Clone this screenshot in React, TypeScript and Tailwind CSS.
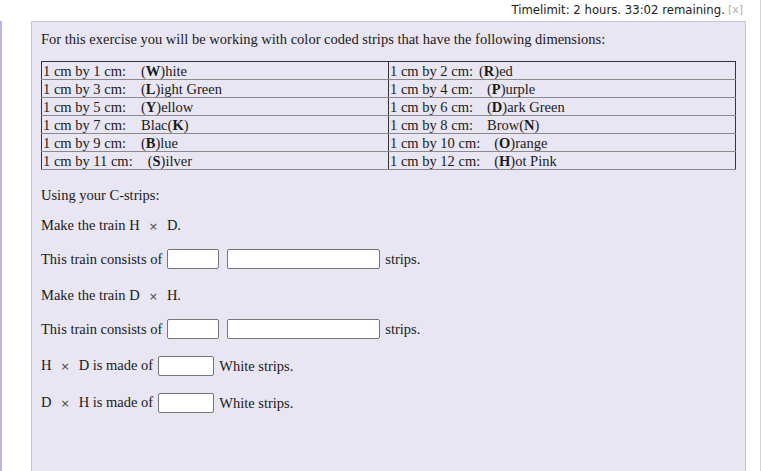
const leftRows: [string, React.ReactNode][] = [
  ['1 cm by 1 cm:', <>(<b>W</b>)hite</>],
  ['1 cm by 3 cm:', <>(<b>L</b>)ight Green</>],
  ['1 cm by 5 cm:', <>(<b>Y</b>)ellow</>],
  ['1 cm by 7 cm:', <>Blac(<b>K</b>)</>],
  ['1 cm by 9 cm:', <>(<b>B</b>)lue</>],
  ['1 cm by 11 cm:', <>(<b>S</b>)ilver</>],
]

const rightRows: [string, React.ReactNode, string][] = [
  ['1 cm by 2 cm:', <>(<b>R</b>)ed</>, 'ml-[6px]'],
  ['1 cm by 4 cm:', <>(<b>P</b>)urple</>, 'ml-[14px]'],
  ['1 cm by 6 cm:', <>(<b>D</b>)ark Green</>, 'ml-[14px]'],
  ['1 cm by 8 cm:', <>Brow(<b>N</b>)</>, 'ml-[14px]'],
  ['1 cm by 10 cm:', <>(<b>O</b>)range</>, 'ml-[14px]'],
  ['1 cm by 12 cm:', <>(<b>H</b>)ot Pink</>, 'ml-[14px]'],
]

function Times() {
  return <span className="mx-[9px] font-['DejaVu_Sans',sans-serif] text-[11px] leading-[16px] text-[#444]">×</span>
}

function Field({ w }: { w: string }) {
  return <span className={`inline-block h-[20px] ${w} rounded-[2px] border border-[#767676] bg-white align-middle`} />
}

export default function App() {
  return (
    <div className="h-[471px] w-[761px] overflow-hidden border-r border-[#d4d4d4] bg-white font-['Liberation_Serif',serif] text-[14.5px] text-[#1a1a1a]">
      <div className="flex h-[21px] items-center justify-end pr-[17px] font-['DejaVu_Sans',sans-serif] text-[11.7px] text-[#222]">
        <span>Timelimit: 2 hours. 33:02 remaining.</span>
        <span className="ml-[3px] text-[11px] text-[#b0b0b0]">[x]</span>
      </div>

      <div className="h-[450px] border-l-2 border-[#b6b6e4] pl-[29px]">
        <div className="h-[500px] w-[715px] border border-[#c3c3dc] bg-[#e8e6f2] pl-[9px] pt-[9px] leading-[16px]">
          <p>For this exercise you will be working with color coded strips that have the following dimensions:</p>

          <table className="mt-[14px] w-[695px] table-fixed border-collapse border border-[#333]">
            <tbody>
              {leftRows.map(([size, name], i) => (
                <tr key={size} className="h-[18px]">
                  <td className="border border-[#333] border-b-[#8a8a8a] px-[1px] py-0 leading-[16px] whitespace-nowrap">
                    {size}
                    <span className="ml-[15px]">{name}</span>
                  </td>
                  <td className="border border-[#333] border-b-[#8a8a8a] px-[1px] py-0 leading-[16px] whitespace-nowrap">
                    {rightRows[i][0]}
                    <span className={rightRows[i][2]}>{rightRows[i][1]}</span>
                  </td>
                </tr>
              ))}
            </tbody>
          </table>

          <p className="mt-[17px]">Using your C-strips:</p>
          <p className="mt-[14px]">Make the train H<Times />D.</p>

          <div className="mt-[14px] flex h-[20px] items-center">
            <span>This train consists of</span>
            <span className="ml-[5px]"><Field w="w-[52px]" /></span>
            <span className="ml-[8px]"><Field w="w-[153px]" /></span>
            <span className="ml-[5px]">strips.</span>
          </div>

          <p className="mt-[18px]">Make the train D<Times />H.</p>

          <div className="mt-[14px] flex h-[20px] items-center">
            <span>This train consists of</span>
            <span className="ml-[5px]"><Field w="w-[52px]" /></span>
            <span className="ml-[8px]"><Field w="w-[153px]" /></span>
            <span className="ml-[5px]">strips.</span>
          </div>

          <div className="mt-[17px] flex h-[20px] items-center">
            <span>H<Times />D is made of</span>
            <span className="ml-[5px]"><Field w="w-[56px]" /></span>
            <span className="ml-[5px]">White strips.</span>
          </div>

          <div className="mt-[17px] flex h-[20px] items-center">
            <span>D<Times />H is made of</span>
            <span className="ml-[5px]"><Field w="w-[56px]" /></span>
            <span className="ml-[5px]">White strips.</span>
          </div>
        </div>
      </div>
    </div>
  )
}
